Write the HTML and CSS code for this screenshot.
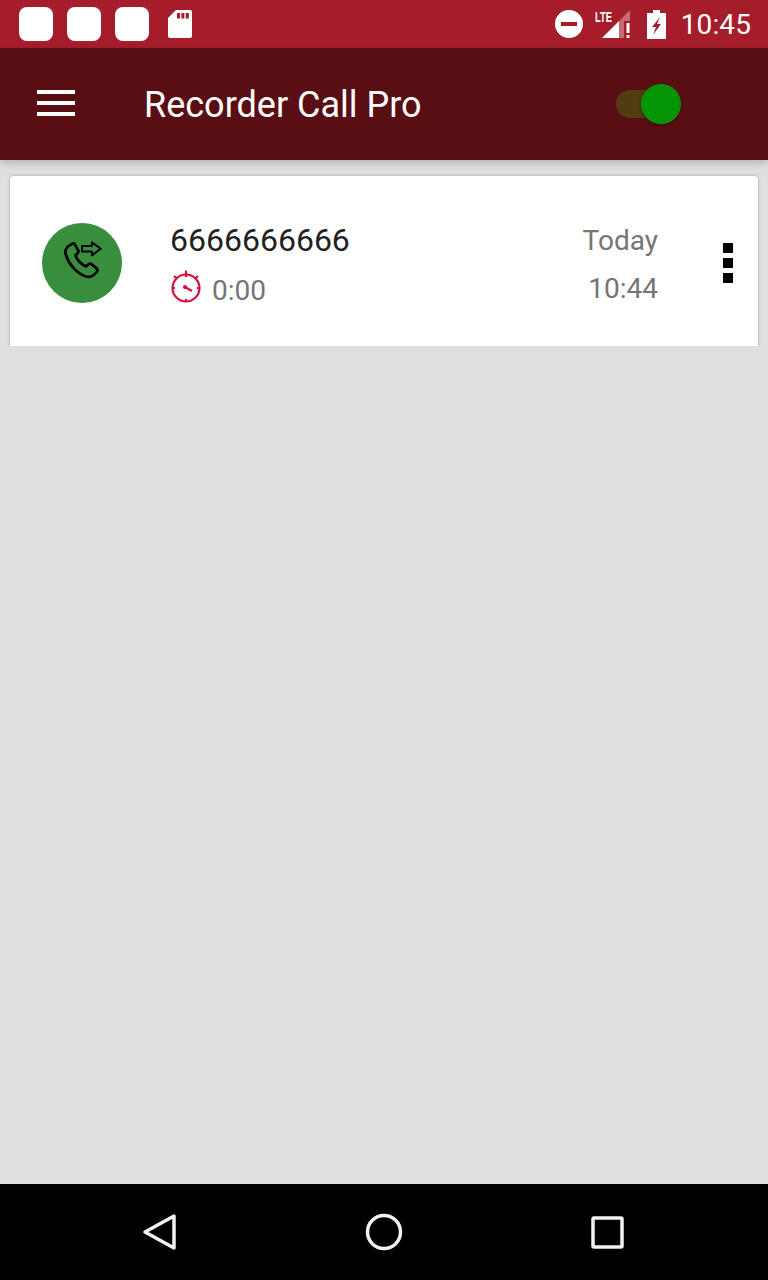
FILE: index.html
```html
<!DOCTYPE html>
<html lang="en">
<head>
    <meta charset="UTF-8">
    <meta name="viewport" content="width=device-width, initial-scale=1.0">
    <title>Recorder Call Pro</title>
    <link rel="stylesheet" href="styles.css">
</head>
<body>

<div class="status-bar">
    <div class="status-left">
        <span class="notif-box"></span>
        <span class="notif-box"></span>
        <span class="notif-box"></span>
        <svg class="sd-icon" width="24" height="28" viewBox="0 0 24 28">
            <path d="M8 0H22a2 2 0 0 1 2 2V26a2 2 0 0 1-2 2H2a2 2 0 0 1-2-2V8Z" fill="#fff"/>
            <rect x="9" y="3" width="3" height="5.5" fill="#a51d2b"/>
            <rect x="13.4" y="3" width="3" height="5.5" fill="#a51d2b"/>
            <rect x="17.8" y="3" width="3" height="5.5" fill="#a51d2b"/>
        </svg>
    </div>
    <div class="status-right">
        <svg width="28" height="28" viewBox="0 0 28 28">
            <circle cx="14" cy="14" r="14" fill="#fff"/>
            <rect x="6" y="12" width="16" height="4" fill="#a51d2b"/>
        </svg>
        <svg class="signal-icon" width="36" height="30" viewBox="0 0 36 30">
            <text x="0" y="13" class="lte-text" textLength="17" lengthAdjust="spacingAndGlyphs">LTE</text>
            <path d="M7 29 L24 12 V29 Z" fill="#fff"/>
            <path d="M24 12 L35 1 V12 H29 V29 H24 Z" fill="#fff" opacity="0.35"/>
            <rect x="31.5" y="14" width="3" height="10" fill="#fff"/>
            <rect x="31.5" y="26" width="3" height="3" fill="#fff"/>
        </svg>
        <svg class="battery-icon" width="19" height="29" viewBox="0 0 19 29">
            <path d="M6 0H13V3H19V29H0V3H6Z" fill="#fff"/>
            <path d="M13 7 L5 17 H9 L6 25 L14 14 H10 Z" fill="#a51d2b"/>
        </svg>
        <span class="clock">10:45</span>
    </div>
</div>

<div class="toolbar">
    <div class="menu-icon">
        <span></span>
        <span></span>
        <span></span>
    </div>
    <div class="toolbar-title">Recorder Call Pro</div>
    <div class="switch">
        <div class="switch-track"></div>
        <div class="switch-thumb"></div>
    </div>
</div>

<div class="content">
    <div class="call-card">
        <div class="call-avatar">
            <svg width="44" height="44" viewBox="0 0 40 40" fill="none" stroke="#000" stroke-width="2.5" stroke-linejoin="round">
                <path d="M7 6 L11 3.5 C12 3 13 3.3 13.5 4 L16.5 9.5 C17 10.5 16.7 11.3 16 12 L14 14 C15 17.5 19 22 23.5 24 L26 22 C27 21.3 28 21.3 28.8 22 L33.5 26 C34.3 27 34.2 28 33.5 29 L31 31.5 C29 33.5 26 34 23 33 C15 30 8 22 5.5 14 C4.5 11 5 8 7 6 Z"/>
                <path d="M20 5.5 H29 V2 L37 8 L29 14 V10.5 H20 Z" stroke-width="1.8"/>
            </svg>
        </div>
        <div class="call-info">
            <div class="call-number">6666666666</div>
            <div class="call-duration">
                <svg width="32" height="34" viewBox="0 0 32 34" fill="none" stroke="#d5103a" stroke-width="2.2">
                    <circle cx="16" cy="19" r="13.5"/>
                    <path d="M16 1.5 V8 M4 7 L7.5 10 M28 7 L24.5 10 M16 30 V33 M2.5 19 H5 M27 19 H29.5"/>
                    <circle cx="15" cy="18" r="2" fill="#d5103a" stroke="none"/>
                    <path d="M15 18 L22 22"/>
                </svg>
                <span class="duration-text">0:00</span>
            </div>
        </div>
        <div class="call-date">
            <span>Today</span>
            <span>10:44</span>
        </div>
        <div class="more-icon">
            <span></span>
            <span></span>
            <span></span>
        </div>
    </div>
</div>

<div class="nav-bar">
    <svg width="36" height="38" viewBox="0 0 36 38" fill="none" stroke="#f2f2f2" stroke-width="3.5" stroke-linejoin="round">
        <path d="M32 3 V35 L3 19 Z"/>
    </svg>
    <svg class="nav-home" width="38" height="38" viewBox="0 0 38 38" fill="none" stroke="#f2f2f2" stroke-width="3.5">
        <circle cx="19" cy="19" r="16.5"/>
    </svg>
    <svg width="33" height="33" viewBox="0 0 33 33" fill="none" stroke="#f2f2f2" stroke-width="3.5" stroke-linejoin="round">
        <rect x="2" y="2" width="29" height="29" rx="1"/>
    </svg>
</div>

</body>
</html>
```

FILE: styles.css
```css
* {
    box-sizing: border-box;
}

body {
    font-family: Roboto, "Liberation Sans", sans-serif;
    background-color: #dfdfdf;
    margin: 0;
    height: 1280px;
    display: flex;
    flex-direction: column;
    overflow: hidden;
}

.status-bar {
    height: 48px;
    flex-shrink: 0;
    background-color: #a51d2b;
    display: flex;
    justify-content: space-between;
    align-items: center;
    padding: 0 17px 0 19px;
}

.status-left {
    display: flex;
    align-items: center;
    gap: 14px;
}

.notif-box {
    width: 34px;
    height: 34px;
    background-color: #fff;
    border-radius: 8px;
}

.sd-icon {
    margin-left: 5px;
}

.status-right {
    display: flex;
    align-items: center;
}

.signal-icon {
    margin-left: 12px;
}

.lte-text {
    font-family: "Liberation Sans", sans-serif;
    font-size: 15px;
    font-weight: bold;
    fill: #fff;
}

.battery-icon {
    margin-left: 16px;
}

.clock {
    color: #fff;
    font-size: 28px;
    margin-left: 15px;
    letter-spacing: 0.1px;
}

.toolbar {
    height: 112px;
    flex-shrink: 0;
    background-color: #590e14;
    display: flex;
    align-items: center;
    padding: 0 0 0 37px;
    box-shadow: 0 3px 8px rgba(0, 0, 0, 0.2);
    position: relative;
}

.menu-icon {
    width: 38px;
    height: 26px;
    margin-bottom: 2px;
    display: flex;
    flex-direction: column;
    justify-content: space-between;
}

.menu-icon span {
    height: 4px;
    background-color: #fff;
}

.toolbar-title {
    color: #fff;
    font-size: 36px;
    margin-left: 69px;
    margin-top: 2px;
    width: 471px;
}

.switch {
    width: 66px;
    height: 40px;
    position: relative;
}

.switch-track {
    position: absolute;
    left: 1px;
    top: 6px;
    width: 56px;
    height: 28px;
    border-radius: 14px;
    background-color: #503c10;
}

.switch-thumb {
    position: absolute;
    left: 26px;
    top: 0;
    width: 40px;
    height: 40px;
    border-radius: 50%;
    background-color: #059405;
    box-shadow: 0 1px 3px rgba(0, 0, 0, 0.3);
}

.content {
    flex: 1;
    padding: 16px 10px 0;
}

.call-card {
    height: 170px;
    background-color: #fff;
    border-radius: 4px 4px 0 0;
    box-shadow: 0 0 3px rgba(0, 0, 0, 0.3);
    clip-path: inset(-4px -4px 0 -4px);
    display: flex;
    align-items: center;
    padding: 0 0 0 32px;
}

.call-avatar {
    width: 80px;
    height: 80px;
    flex-shrink: 0;
    border-radius: 50%;
    background-color: #388e3c;
    display: flex;
    justify-content: center;
    align-items: center;
    padding: 0 1px 3px 0;
    margin-top: 4px;
}

.call-info {
    margin-left: 48px;
    width: 372px;
    padding-top: 2px;
}

.call-number {
    font-size: 32px;
    color: #212121;
    line-height: 38px;
    margin-bottom: 10px;
}

.call-duration {
    display: flex;
    align-items: center;
    gap: 10px;
    font-size: 28px;
    color: #757575;
    height: 34px;
}

.duration-text {
    margin-top: 8px;
}

.call-date {
    width: 116px;
    display: flex;
    flex-direction: column;
    align-items: flex-end;
    gap: 15px;
    font-size: 28px;
    color: #757575;
    line-height: 33px;
    margin-top: 6px;
}

.more-icon {
    margin-left: 65px;
    display: flex;
    flex-direction: column;
    gap: 5px;
    margin-top: 4px;
}

.more-icon span {
    width: 10px;
    height: 10px;
    background-color: #000;
}

.nav-bar {
    height: 96px;
    flex-shrink: 0;
    background-color: #000;
    display: flex;
    justify-content: space-between;
    align-items: center;
    padding: 0 144px 0 142px;
}

.nav-home {
    margin-right: 2px;
}
```
